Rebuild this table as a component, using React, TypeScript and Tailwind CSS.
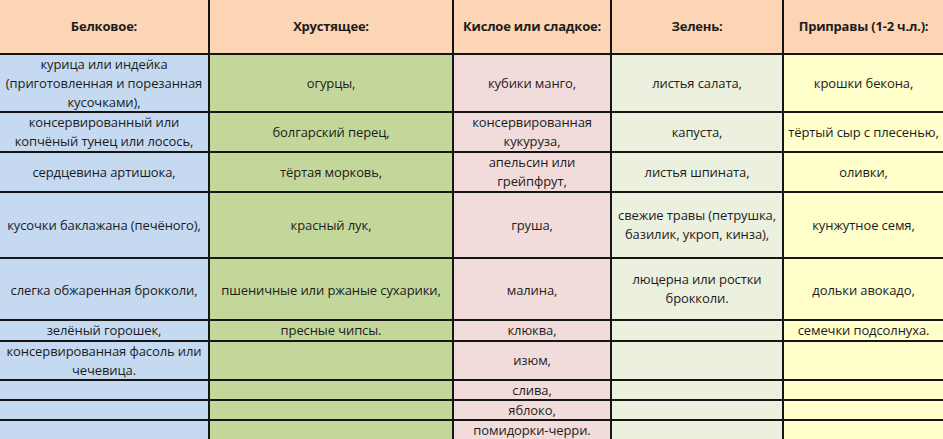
import React from "react";

const HEADERS = [
  "Белковое:",
  "Хрустящее:",
  "Кислое или сладкое:",
  "Зелень:",
  "Приправы (1-2 ч.л.):",
];

const COL_BG = [
  "bg-[#c5d9f1]",
  "bg-[#c4d79b]",
  "bg-[#f2dcdb]",
  "bg-[#ebf1de]",
  "bg-[#ffffcc]",
];

const ROW_H = [
  "h-[58px]",
  "h-[40px]",
  "h-[40px]",
  "h-[66px]",
  "h-[62px]",
  "h-[21px]",
  "h-[39px]",
  "h-[20px]",
  "h-[20px]",
  "h-[20px]",
];

// each row: one text per column ("" = empty cell)
const ROWS: string[][] = [
  [
    "курица или индейка (приготовленная и порезанная кусочками),",
    "огурцы,",
    "кубики манго,",
    "листья салата,",
    "крошки бекона,",
  ],
  [
    "консервированный или копчёный тунец или лосось,",
    "болгарский перец,",
    "консервированная кукуруза,",
    "капуста,",
    "тёртый сыр с плесенью,",
  ],
  [
    "сердцевина артишока,",
    "тёртая морковь,",
    "апельсин или грейпфрут,",
    "листья шпината,",
    "оливки,",
  ],
  [
    "кусочки баклажана (печёного),",
    "красный лук,",
    "груша,",
    "свежие травы (петрушка, базилик, укроп, кинза),",
    "кунжутное семя,",
  ],
  [
    "слегка обжаренная брокколи,",
    "пшеничные или ржаные сухарики,",
    "малина,",
    "люцерна или ростки брокколи.",
    "дольки авокадо,",
  ],
  ["зелёный горошек,", "пресные чипсы.", "клюква,", "", "семечки подсолнуха."],
  ["консервированная фасоль или чечевица.", "", "изюм,", "", ""],
  ["", "", "слива,", "", ""],
  ["", "", "яблоко,", "", ""],
  ["", "", "помидорки-черри.", "", ""],
];

// cells where the text sits near the top rather than centred
const TOP_ALIGN: Record<string, boolean> = {
  "4-0": true,
  "4-1": true,
  "4-2": true,
  "4-4": true,
};

export default function App() {
  return (
    <div
      className="w-[943px] h-[439px] overflow-hidden bg-white text-[#1c1c1c]"
      style={{ fontFamily: '"Open Sans", "Noto Sans", sans-serif' }}
    >
      <div className="grid grid-cols-[210px_244px_158px_172px_159px] w-[943px]">
        {HEADERS.map((h, i) => (
          <div
            key={h}
            className={`h-[55px] flex items-center justify-center bg-[#fcd5b4] border-b-2 border-[#151515] text-[13px] font-bold tracking-[-0.2px] whitespace-nowrap ${
              i < 4 ? "border-r-2" : ""
            }`}
          >
            {h}
          </div>
        ))}
        {ROWS.map((row, r) =>
          row.map((text, c) => (
            <div
              key={`${r}-${c}`}
              className={`${ROW_H[r]} ${COL_BG[c]} flex justify-center text-center px-0.5 border-b-2 border-[#151515] text-[13px] leading-[19px] tracking-[-0.1px] overflow-hidden ${
                c < 4 ? "border-r-2" : ""
              } ${
                TOP_ALIGN[`${r}-${c}`] ? "items-start pt-[22px]" : "items-center"
              }`}
            >
              <span className="block">{text}</span>
            </div>
          )),
        )}
      </div>
    </div>
  );
}
